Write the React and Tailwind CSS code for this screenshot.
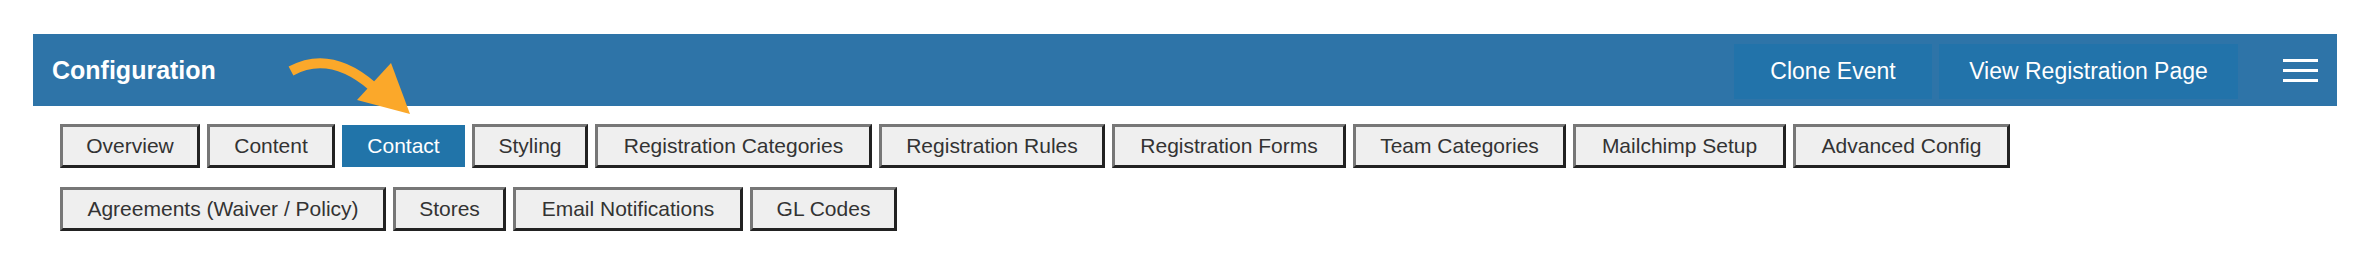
import { useState } from 'react'

const ROWS = [
  [
    { label: 'Overview', w: 'w-[140px]' },
    { label: 'Content', w: 'w-[128px]' },
    { label: 'Contact', w: 'w-[123px]' },
    { label: 'Styling', w: 'w-[116px]' },
    { label: 'Registration Categories', w: 'w-[277px]' },
    { label: 'Registration Rules', w: 'w-[226px]' },
    { label: 'Registration Forms', w: 'w-[234px]' },
    { label: 'Team Categories', w: 'w-[213px]' },
    { label: 'Mailchimp Setup', w: 'w-[213px]' },
    { label: 'Advanced Config', w: 'w-[217px]' },
  ],
  [
    { label: 'Agreements (Waiver / Policy)', w: 'w-[326px]' },
    { label: 'Stores', w: 'w-[113px]' },
    { label: 'Email Notifications', w: 'w-[230px]' },
    { label: 'GL Codes', w: 'w-[147px]' },
  ],
]

function Tab({ label, w, active, onClick }) {
  if (active) {
    return (
      <button
        onClick={onClick}
        className={`${w} h-[42px] bg-[#2174a9] text-white text-[21px] leading-[24px] flex items-center justify-center`}
      >
        {label}
      </button>
    )
  }
  return (
    <button
      onClick={onClick}
      className={`${w} h-[44px] border-[3px] border-t-[#777] border-l-[#777] border-b-[#222] border-r-[#222] bg-[#efefef] text-[#333] text-[21px] leading-[24px] flex items-center justify-center`}
    >
      {label}
    </button>
  )
}

export default function App() {
  const [active, setActive] = useState('Contact')

  return (
    <div className="relative w-[2358px] h-[266px] bg-white pt-[34px] pl-[33px] pr-[21px] font-['Liberation_Sans',Arial,sans-serif]">
      {/* Header bar */}
      <div className="h-[72px] flex items-center bg-[#2e74a8] pl-[19px] pr-[19px]">
        <h1 className="text-white text-[25px] font-bold leading-none">Configuration</h1>
        <div className="flex-1" />
        <div className="flex items-center gap-[7px] mt-[3px]">
          <button className="w-[198px] h-[55px] bg-[#2273aa] text-white text-[23px]">Clone Event</button>
          <button className="w-[299px] h-[55px] bg-[#2273aa] text-white text-[23px]">View Registration Page</button>
        </div>
        <button className="ml-[45px] w-[35px] flex flex-col gap-[7px] mt-[1px]" aria-label="Menu">
          <span className="block h-[3px] w-full bg-white" />
          <span className="block h-[3px] w-full bg-white" />
          <span className="block h-[3px] w-full bg-white" />
        </button>
      </div>

      {/* Tabs */}
      <div className="mt-[18px] pl-[27px] flex flex-col gap-[19px]">
        {ROWS.map((row, i) => (
          <div key={i} className="flex items-center gap-[7px] h-[44px]">
            {row.map(t => (
              <Tab key={t.label} {...t} active={active === t.label} onClick={() => setActive(t.label)} />
            ))}
          </div>
        ))}
      </div>

      {/* Annotation arrow */}
      <svg className="absolute left-[280px] top-[50px] w-[140px] h-[70px] pointer-events-none" viewBox="280 50 140 70">
        <path d="M 291 71 Q 330 50 372 86" fill="none" stroke="#fba82a" strokeWidth="10" />
        <polygon points="391,63 357,100 410,114" fill="#fba82a" />
      </svg>
    </div>
  )
}
